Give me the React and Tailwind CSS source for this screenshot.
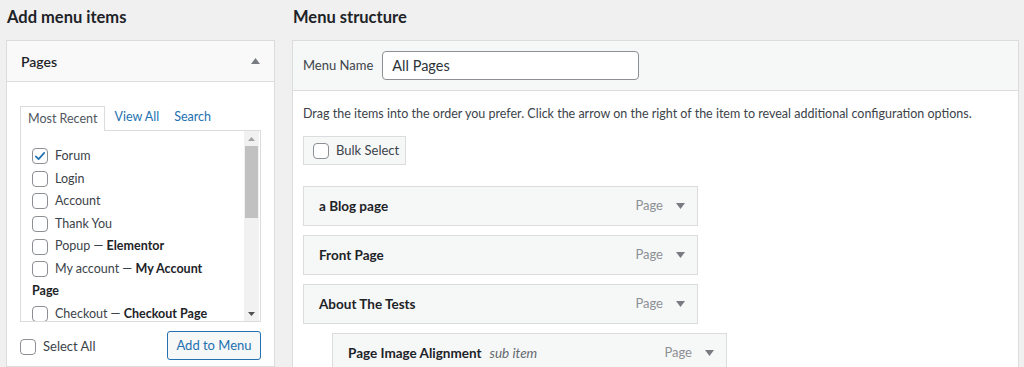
import React from 'react';

const font = { fontFamily: 'Lato, "Noto Sans", Arial, sans-serif' };

function Box({ checked }) {
  return (
    <span className="w-4 h-4 shrink-0 rounded-[4px] border border-[#8c8f94] bg-white flex items-center justify-center">
      {checked && (
        <svg width="14" height="14" viewBox="0 0 20 20">
          <path d="M4 10.5l4 4 8-9" fill="none" stroke="#2271b1" strokeWidth="2.4" strokeLinecap="round" strokeLinejoin="round" />
        </svg>
      )}
    </span>
  );
}

function Caret({ up }) {
  return (
    <svg width="9" height="6" viewBox="0 0 9 6" className="shrink-0">
      {up ? <path d="M0 6L4.5 0L9 6Z" fill="#787c82" /> : <path d="M0 0L9 0L4.5 6Z" fill="#787c82" />}
    </svg>
  );
}

const recent = [
  { label: 'Forum', checked: true },
  { label: 'Login' },
  { label: 'Account' },
  { label: 'Thank You' },
  { label: 'Popup', extra: 'Elementor' },
  { label: 'My account', extra: 'My Account' },
];

function MenuItem({ title, sub, indent }) {
  return (
    <div className={`h-10 w-[395px] shrink-0 bg-[#f6f7f7] border border-[#dcdcde] flex items-center pl-[15px] pr-[12px] ${indent ? 'ml-[29px]' : ''}`}>
      <span className="text-[13.5px] font-bold text-[#1d2327]">{title}</span>
      {sub && <span className="ml-[8px] text-[13.5px] italic text-[#646970]">{sub}</span>}
      <span className="ml-auto text-[13px] text-[#8c8f94]">Page</span>
      <span className="ml-[13px]"><Caret /></span>
    </div>
  );
}

export default function App() {
  return (
    <div style={font} className="w-[1024px] h-[367px] overflow-hidden bg-[#f0f0f1] flex text-[#2c3338]">
      {/* left column */}
      <div className="ml-[6px] w-[269px] shrink-0 flex flex-col">
        <h2 className="h-[40px] shrink-0 pl-[1px] flex items-center text-[16.5px] font-bold text-[#1d2327] pb-[5px]">Add menu items</h2>
        <div className="border border-[#dcdcde] bg-white flex-1 flex flex-col">
          <div className="h-[41px] shrink-0 bg-[#f9f9f9] border-b border-[#dcdcde] flex items-center justify-between pl-[14px] pr-[14px]">
            <span className="text-[14px] font-semibold text-[#1d2327]">Pages</span>
            <Caret up />
          </div>
          <div className="px-[13px] pt-[23px] shrink-0">
            <div className="flex items-end h-[25px]">
              <div className="h-[25px] px-[7px] border border-b-0 border-[#dcdcde] bg-white flex items-center text-[12.5px] text-[#50575e] relative top-[1px]">Most Recent</div>
              <span className="ml-[9px] h-[25px] flex items-center text-[12.5px] text-[#2271b1]">View All</span>
              <span className="ml-[15px] h-[25px] flex items-center text-[12.5px] text-[#2271b1]">Search</span>
            </div>
            <div className="h-[192px] border border-[#dcdcde] flex overflow-hidden">
              <div className="flex-1 pl-[11px] pt-[14px] flex flex-col">
                {recent.map((r) => (
                  <div key={r.label} className="h-[22.6px] shrink-0 flex items-center gap-[7px] text-[12.5px] text-[#3c434a]">
                    <Box checked={r.checked} />
                    <span>
                      {r.label}
                      {r.extra && (
                        <>
                          {' — '}
                          <span className="font-bold text-[#1d2327]">{r.extra}</span>
                        </>
                      )}
                    </span>
                  </div>
                ))}
                <div className="h-[22.6px] shrink-0 flex items-center text-[12.5px] font-bold text-[#1d2327]">Page</div>
                <div className="h-[22.6px] shrink-0 flex items-center gap-[7px] text-[12.5px] text-[#3c434a]">
                  <Box />
                  <span>
                    Checkout — <span className="font-bold text-[#1d2327]">Checkout Page</span>
                  </span>
                </div>
              </div>
              <div className="w-[15px] shrink-0 bg-[#f1f1f1] mr-[1px] flex flex-col items-center">
                <div className="h-[15px] shrink-0 flex items-center justify-center">
                  <svg width="7" height="4" viewBox="0 0 7 4"><path d="M0 4L3.5 0L7 4Z" fill="#a3a3a3" /></svg>
                </div>
                <div className="w-[13px] h-[72px] shrink-0 bg-[#c1c1c1]" />
                <div className="flex-1" />
                <div className="h-[15px] shrink-0 flex items-center justify-center">
                  <svg width="7" height="4" viewBox="0 0 7 4"><path d="M0 0L7 0L3.5 4Z" fill="#505050" /></svg>
                </div>
              </div>
            </div>
            <div className="mt-[9px] flex items-center justify-between">
              <label className="flex items-center gap-[7px] text-[13px] text-[#3c434a] pt-[3px]">
                <Box />
                Select All
              </label>
              <button className="h-[29px] w-[94px] rounded-[3px] border border-[#2271b1] bg-[#f6f7f7] text-[13px] text-[#2271b1]">Add to Menu</button>
            </div>
          </div>
        </div>
      </div>

      {/* right column */}
      <div className="ml-[17px] w-[727px] shrink-0 flex flex-col">
        <h2 className="h-[40px] shrink-0 pl-[1px] flex items-center text-[16.5px] font-bold text-[#1d2327] pb-[5px]">Menu structure</h2>
        <div className="border border-[#dcdcde] bg-white flex-1 flex flex-col">
          <div className="h-[50px] shrink-0 bg-[#f6f7f7] border-b border-[#dcdcde] flex items-center pl-[10px]">
            <span className="text-[13px] text-[#3c434a]">Menu Name</span>
            <div className="ml-[9px] w-[257px] h-[29px] rounded-[4px] border border-[#8c8f94] bg-white flex items-center pl-[9px] text-[14.5px] text-[#2c3338]">All Pages</div>
          </div>
          <div className="pl-[10px] pt-[14px] flex flex-col shrink-0">
            <p className="text-[12.5px] text-[#3c434a] leading-[18px]">Drag the items into the order you prefer. Click the arrow on the right of the item to reveal additional configuration options.</p>
            <div className="mt-[13px] w-[103px] h-[29px] bg-[#f6f7f7] border border-[#dcdcde] flex items-center pl-[9px] gap-[7px] text-[13px] text-[#3c434a]">
              <Box />
              Bulk Select
            </div>
            <div className="mt-[21px] flex flex-col gap-[9px]">
              <MenuItem title="a Blog page" />
              <MenuItem title="Front Page" />
              <MenuItem title="About The Tests" />
              <MenuItem title="Page Image Alignment" sub="sub item" indent />
            </div>
          </div>
        </div>
      </div>
    </div>
  );
}
